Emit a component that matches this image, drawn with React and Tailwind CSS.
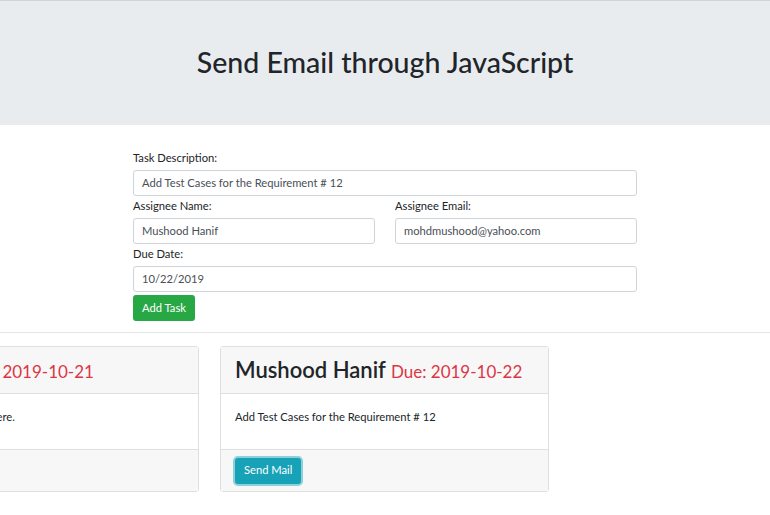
import React from 'react';

function Field({label, value, className = ""}) {
    return (
        <div className={className}>
            <label className="block leading-[17px] mb-[4px] text-[11.2px] text-[#212529]">{label}</label>
            <div className="h-[26px] border border-[#ced4da] rounded-[3px] px-[8px] flex items-center text-[11.2px] text-[#495057] bg-white">
                {value}
            </div>
        </div>
    );
}

function TaskCard({name, due, description, showButton}) {
    return (
        <div className="w-[329px] shrink-0 border border-[#dfdfdf] rounded-[3px] bg-white">
            <div className="h-[47px] bg-[#f7f7f7] border-b border-[#dfdfdf] px-[14px] flex items-center">
                <h3 className="text-[22px] font-semibold leading-none text-[#212529] whitespace-nowrap">
                    {name}<span className="ml-[5px] text-[17px] font-normal text-[#dc3545]">Due: {due}</span>
                </h3>
            </div>
            <div className="h-[55px] px-[14px] pt-[14px]">
                <p className="text-[11.2px] leading-[17px] text-[#212529] whitespace-nowrap">{description}</p>
            </div>
            <div className="h-[42px] bg-[#f7f7f7] border-t border-[#dfdfdf] px-[14px] flex items-center">
                {showButton && (
                    <button className="h-[26px] px-[9px] rounded-[3px] bg-[#17a2b8] text-white text-[11.2px] ring-2 ring-[#8bd0db]">
                        Send Mail
                    </button>
                )}
            </div>
        </div>
    );
}

export default function App() {
    return (
        <div className="min-h-screen bg-white overflow-hidden font-['Lato','Liberation_Sans',sans-serif] text-[#212529]">
            <div className="h-[125px] border-t border-[#cfd4d9] bg-[#e9ecef] flex items-center justify-center">
                <h1 className="text-[28.5px] font-medium leading-none mb-[2px]">Send Email through JavaScript</h1>
            </div>

            <div className="w-[504px] mx-auto pt-[24px]">
                <Field label="Task Description:" value="Add Test Cases for the Requirement # 12" />
                <div className="grid grid-cols-2 gap-[20px] mt-[1px]">
                    <Field label="Assignee Name:" value="Mushood Hanif" />
                    <Field label="Assignee Email:" value="mohdmushood@yahoo.com" />
                </div>
                <Field className="mt-[1px]" label="Due Date:" value="10/22/2019" />
                <button className="mt-[3px] h-[26px] px-[9px] rounded-[3px] bg-[#28a745] text-white text-[11.2px]">
                    Add Task
                </button>
            </div>

            <hr className="mt-[11px] border-0 border-t border-[#e6e6e6]" />

            <div className="flex gap-[21px] ml-[-130px] mt-[13px]">
                <TaskCard name="Sara Ali" due="2019-10-21" description="Any description goes here." />
                <TaskCard name="Mushood Hanif" due="2019-10-22" description="Add Test Cases for the Requirement # 12" showButton />
            </div>
        </div>
    );
}
